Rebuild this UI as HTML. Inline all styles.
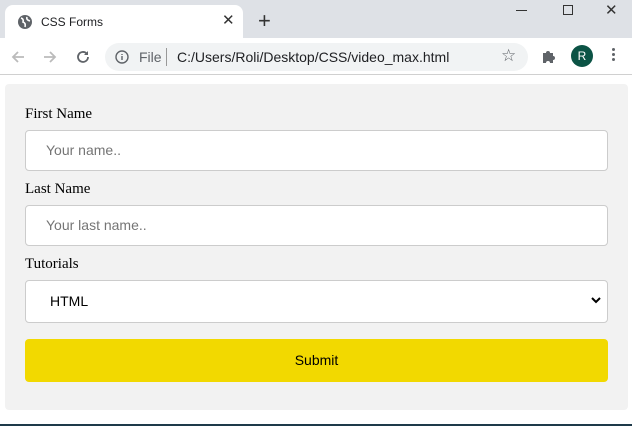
<!DOCTYPE html>
<html><head><style>
*{box-sizing:border-box;margin:0;padding:0}
body{width:632px;height:426px;background:#fff;position:relative;overflow:hidden;font-family:"Liberation Sans",sans-serif}
.abs{position:absolute}
.top{left:0;top:0;width:632px;height:38px;background:#dee1e6}
.tab{left:5px;top:5px;width:238px;height:34px;background:#fff;border-radius:8px 8px 0 0}
.tool{left:0;top:38px;width:632px;height:37px;background:#fff;border-bottom:1px solid #d0d0d0}
.omni{left:105px;top:43px;width:423px;height:28px;background:#f1f3f4;border-radius:14px}
.box{left:5px;top:84px;width:623px;height:326px;background:#f2f2f2;border-radius:4px}
.lbl{font-family:"Liberation Serif",serif;font-size:15px;color:#000;left:25px}
.inp{left:25px;width:583px;height:41px;background:#fff;border:1px solid #ccc;border-radius:4px;font-size:14px;color:#757575;padding-left:20px;line-height:39px}
.btn{left:25px;top:339px;width:583px;height:43px;background:#f2d900;border-radius:4px;text-align:center;line-height:43px;font-size:14px;color:#000}
</style></head><body>
<div class="abs top"></div>
<div class="abs tab"></div>
<svg class="abs" style="left:17px;top:14px" width="16" height="16" viewBox="0 0 16 16"><circle cx="8" cy="8" r="7" fill="#5f6368"/><path d="M4 4 Q7 5 6 8 Q9 9 8 13 M10 3 Q9 6 13 7" stroke="#fff" stroke-width="1.6" fill="none"/></svg>
<div class="abs" style="left:41px;top:15px;font-size:12px;color:#202124">CSS Forms</div>
<div class="abs" style="left:222px;top:11px;font-size:15px;color:#333">✕</div>
<div class="abs" style="left:258px;top:8px;font-size:22px;color:#333">+</div>
<div class="abs" style="left:516px;top:10px;width:11px;height:1px;background:#333"></div>
<div class="abs" style="left:563px;top:5px;width:10px;height:10px;border:1px solid #333"></div>
<div class="abs" style="left:605px;top:1px;font-size:15px;color:#333">✕</div>
<div class="abs tool"></div>
<svg class="abs" style="left:10px;top:49px" width="16" height="16" viewBox="0 0 16 16"><path d="M14 8H3M8 3L3 8l5 5" stroke="#bbb" stroke-width="1.8" fill="none"/></svg>
<svg class="abs" style="left:42px;top:49px" width="16" height="16" viewBox="0 0 16 16"><path d="M2 8h11M8 3l5 5-5 5" stroke="#bbb" stroke-width="1.8" fill="none"/></svg>
<svg class="abs" style="left:75px;top:49px" width="16" height="16" viewBox="0 0 16 16"><path d="M13 8a5 5 0 1 1-1.5-3.6" stroke="#5f6368" stroke-width="1.8" fill="none"/><path d="M13 2v4H9z" fill="#5f6368"/></svg>
<div class="abs omni"></div>
<svg class="abs" style="left:115px;top:50px" width="14" height="14" viewBox="0 0 14 14"><circle cx="7" cy="7" r="6" fill="none" stroke="#5f6368" stroke-width="1.4"/><path d="M7 6v4M7 4v1" stroke="#5f6368" stroke-width="1.4"/></svg>
<div class="abs" style="left:139px;top:49px;font-size:14px;color:#5f6368">File</div>
<div class="abs" style="left:166px;top:48px;width:1px;height:18px;background:#999"></div>
<div class="abs" style="left:177px;top:49px;font-size:14px;color:#202124">C:/Users/Roli/Desktop/CSS/video_max.html</div>
<div class="abs" style="left:501px;top:46px;font-size:17px;color:#5f6368">☆</div>
<svg class="abs" style="left:541px;top:48px" width="16" height="16" viewBox="0 0 16 16"><path d="M2 5h3a2 2 0 1 1 4 0h3v3a2 2 0 1 1 0 4v3H9a2 2 0 1 0-4 0H2z" fill="#5f6368"/></svg>
<div class="abs" style="left:571px;top:45px;width:22px;height:22px;border-radius:50%;background:#0b5345;color:#fff;font-size:12px;text-align:center;line-height:22px">R</div>
<div class="abs" style="left:612px;top:48px;width:3px;height:3px;background:#5f6368;border-radius:50%;box-shadow:0 5px 0 #5f6368,0 10px 0 #5f6368"></div>
<div class="abs box"></div>
<div class="abs lbl" style="top:106px">First Name</div>
<div class="abs inp" style="top:130px">Your name..</div>
<div class="abs lbl" style="top:181px">Last Name</div>
<div class="abs inp" style="top:205px">Your last name..</div>
<div class="abs lbl" style="top:256px">Tutorials</div>
<div class="abs inp" style="top:280px;height:43px;line-height:41px;color:#000;padding-left:24px">HTML</div>
<svg class="abs" style="left:591px;top:296px" width="10" height="8" viewBox="0 0 10 8"><path d="M1 2l4 4 4-4" stroke="#000" stroke-width="2" fill="none"/></svg>
<div class="abs btn">Submit</div>
<div class="abs" style="left:0;top:424px;width:632px;height:2px;background:#1e3a4a"></div>
</body></html>
